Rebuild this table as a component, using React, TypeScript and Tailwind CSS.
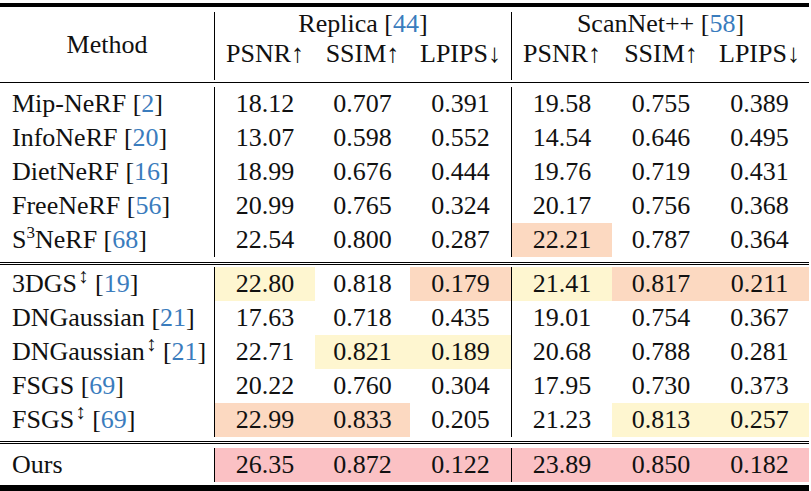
import React from 'react';

type Hl = '' | 'y' | 'o' | 'r';

const hlClass: Record<Hl, string> = {
  '': '',
  y: 'bg-[#fef6d0]',
  o: 'bg-[#fcd9c1]',
  r: 'bg-[#fbc1c4]',
};

// column widths incl. the 1px vertical rules on PSNR cells
const widths = ['w-[101px] border-l border-black', 'w-[95px]', 'w-[101px]', 'w-[101px] border-l border-black', 'w-[98px]', 'w-[99px]'];

function Cite({ n }: { n: string }) {
  return <>[<span className="text-[#3a7cbd]">{n}</span>]</>;
}

function Row({ name, vals, hl = ['', '', '', '', '', ''] }: { name: React.ReactNode; vals: string[]; hl?: Hl[] }) {
  return (
    <div className="flex h-[34px]">
      <div className="w-[214px] pl-[12px] leading-[34px] whitespace-nowrap">{name}</div>
      {vals.map((v, i) => (
        <div key={i} className={`${widths[i]} ${hlClass[hl[i]]} text-center leading-[34px]`}>{v}</div>
      ))}
    </div>
  );
}

function Up() {
  return <sup className="text-[21px] -top-[9px] ml-px">↕</sup>;
}

function DoubleRule({ before, after }: { before: string; after: string }) {
  return (
    <div className="w-[809px]">
      <div className={before} />
      <div className="h-px bg-black" />
      <div className="h-px" />
      <div className="h-px bg-black" />
      <div className={after} />
    </div>
  );
}

export default function App() {
  return (
    <div className="w-[811px] h-[491px] overflow-hidden bg-white text-[#111] [font-family:'Liberation_Serif',serif] text-[26px]">
      <div className="h-[3px]" />
      <div className="w-[809px] h-[4px] bg-black" />
      <div className="h-[5px]" />

      {/* header */}
      <div className="flex h-[68px]">
        <div className="w-[214px] flex items-center justify-center pb-[4px]">Method</div>
        <div className="w-[297px] border-l border-black flex flex-col">
          <div className="h-[24px] leading-[24px] text-center">Replica <Cite n="44" /></div>
          <div className="flex h-[36px] leading-[36px]">
            <div className="w-[100px] text-center">PSNR↑</div>
            <div className="w-[95px] text-center">SSIM↑</div>
            <div className="w-[101px] text-center">LPIPS↓</div>
          </div>
        </div>
        <div className="w-[298px] border-l border-black flex flex-col">
          <div className="h-[24px] leading-[24px] text-center">ScanNet++ <Cite n="58" /></div>
          <div className="flex h-[36px] leading-[36px]">
            <div className="w-[100px] text-center">PSNR↑</div>
            <div className="w-[98px] text-center">SSIM↑</div>
            <div className="w-[99px] text-center">LPIPS↓</div>
          </div>
        </div>
      </div>
      <div className="h-[2px]" />
      <div className="w-[809px] h-px bg-black" />
      <div className="h-[4px]" />

      <Row name={<>Mip-NeRF <Cite n="2" /></>} vals={['18.12', '0.707', '0.391', '19.58', '0.755', '0.389']} />
      <Row name={<>InfoNeRF <Cite n="20" /></>} vals={['13.07', '0.598', '0.552', '14.54', '0.646', '0.495']} />
      <Row name={<>DietNeRF <Cite n="16" /></>} vals={['18.99', '0.676', '0.444', '19.76', '0.719', '0.431']} />
      <Row name={<>FreeNeRF <Cite n="56" /></>} vals={['20.99', '0.765', '0.324', '20.17', '0.756', '0.368']} />
      <Row
        name={<>S<sup className="text-[17px] -top-[10px]">3</sup>NeRF <Cite n="68" /></>}
        vals={['22.54', '0.800', '0.287', '22.21', '0.787', '0.364']}
        hl={['', '', '', 'o', '', '']}
      />

      <DoubleRule before="h-[5px]" after="h-[2px]" />

      <Row
        name={<>3DGS<Up /> <Cite n="19" /></>}
        vals={['22.80', '0.818', '0.179', '21.41', '0.817', '0.211']}
        hl={['y', '', 'o', 'y', 'o', 'o']}
      />
      <Row name={<>DNGaussian <Cite n="21" /></>} vals={['17.63', '0.718', '0.435', '19.01', '0.754', '0.367']} />
      <Row
        name={<>DNGaussian<Up /> <Cite n="21" /></>}
        vals={['22.71', '0.821', '0.189', '20.68', '0.788', '0.281']}
        hl={['', 'y', 'y', '', '', '']}
      />
      <Row name={<>FSGS <Cite n="69" /></>} vals={['20.22', '0.760', '0.304', '17.95', '0.730', '0.373']} />
      <Row
        name={<>FSGS<Up /> <Cite n="69" /></>}
        vals={['22.99', '0.833', '0.205', '21.23', '0.813', '0.257']}
        hl={['o', 'o', '', '', 'y', 'y']}
      />

      <DoubleRule before="h-[4px]" after="h-[4px]" />

      <Row name="Ours" vals={['26.35', '0.872', '0.122', '23.89', '0.850', '0.182']} hl={['r', 'r', 'r', 'r', 'r', 'r']} />

      <div className="h-[3px]" />
      <div className="w-[809px] h-[6px] bg-black" />
    </div>
  );
}
